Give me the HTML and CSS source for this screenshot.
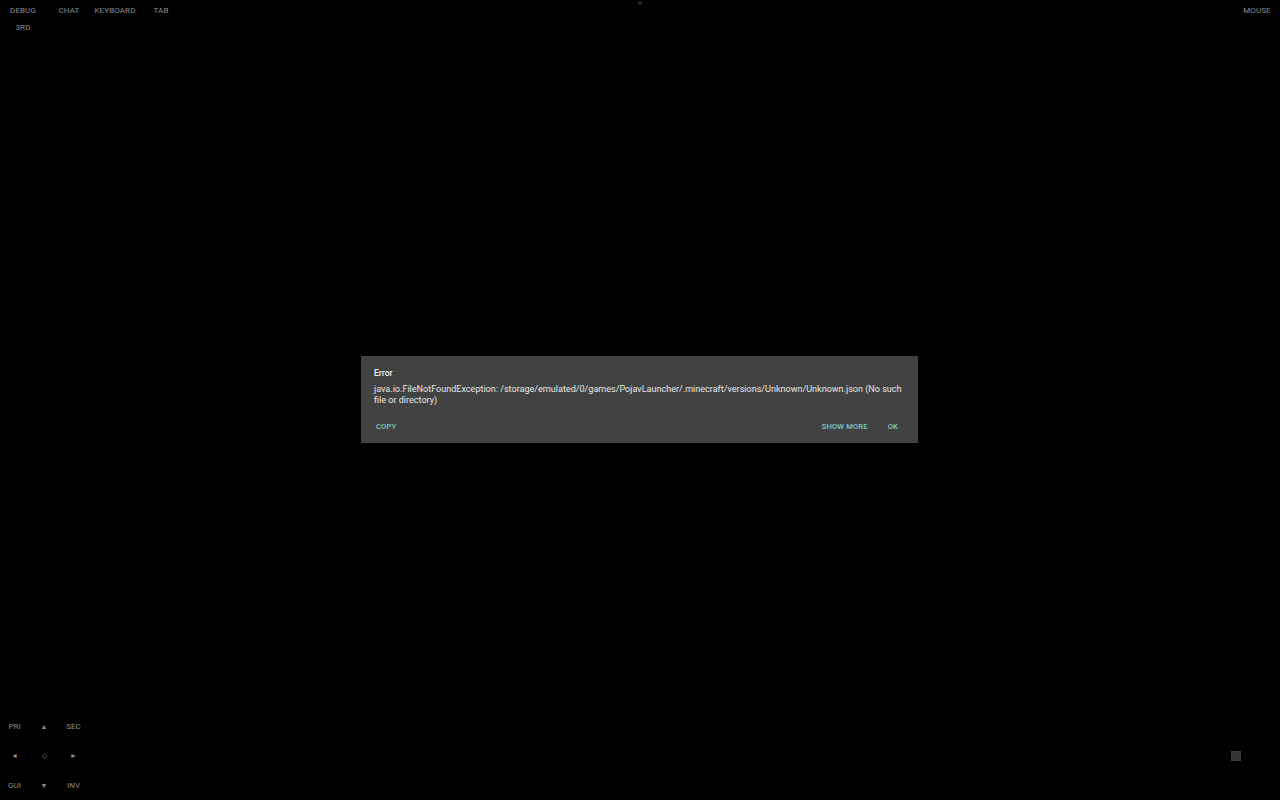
FILE: index.html
```html
<!DOCTYPE html>
<html>
<head>
<meta charset="utf-8">
<link rel="stylesheet" href="styles.css">
</head>
<body>
<div class="screen">
  <div class="topbar">
    <div class="top-left">
      <div class="ctl">DEBUG</div>
      <div class="ctl">CHAT</div>
      <div class="ctl">KEYBOARD</div>
      <div class="ctl">TAB</div>
      <div class="ctl">3RD</div>
    </div>
    <div class="top-center"><span class="dot"></span></div>
    <div class="top-right">
      <div class="ctl">MOUSE</div>
    </div>
  </div>

  <div class="middle">
    <div class="dialog">
      <div class="title">Error</div>
      <div class="message">java.io.FileNotFoundException: /storage/emulated/0/games/PojavLauncher/.minecraft/versions/Unknown/Unknown.json (No such file or directory)</div>
      <div class="actions">
        <span class="btn">COPY</span>
        <span class="spacer"></span>
        <span class="btn">SHOW MORE</span>
        <span class="btn">OK</span>
      </div>
    </div>
  </div>

  <div class="bottombar">
    <div class="dpad">
      <div class="pad">PRI</div>
      <div class="pad sym">&#9650;</div>
      <div class="pad">SEC</div>
      <div class="pad sym">&#9668;</div>
      <div class="pad sym">&#9671;</div>
      <div class="pad sym">&#9658;</div>
      <div class="pad">GUI</div>
      <div class="pad sym">&#9660;</div>
      <div class="pad">INV</div>
    </div>
    <div class="square-wrap"><span class="square"></span></div>
  </div>
</div>
</body>
</html>
```
FILE: styles.css
```css
html, body {
  margin: 0;
  padding: 0;
  background: #000;
  width: 1280px;
  height: 800px;
  overflow: hidden;
  font-family: Roboto, "Liberation Sans", sans-serif;
}
.screen {
  width: 1280px;
  height: 800px;
  display: flex;
  flex-direction: column;
}
.topbar {
  display: flex;
  justify-content: space-between;
  align-items: flex-start;
  height: 36px;
}
.top-left {
  display: flex;
  flex-wrap: wrap;
  width: 184px;
}
.ctl {
  width: 46px;
  height: 18px;
  display: flex;
  align-items: center;
  justify-content: center;
  color: #8c8c8c;
  font-size: 8px;
  letter-spacing: 0.1px;
  padding-top: 2px;
  box-sizing: border-box;
}
.top-left .ctl:nth-child(5) { padding-top: 1px; }
.top-center {
  width: 10px;
  padding-top: 1px;
  display: flex;
  justify-content: center;
}
.dot {
  width: 4px;
  height: 4px;
  border-radius: 50%;
  background: #2a2a2a;
}
.top-right {
  width: 184px;
  display: flex;
  justify-content: flex-end;
}
.top-right .ctl { width: 46px; }

.middle {
  flex: 1;
  display: flex;
  align-items: flex-start;
  justify-content: center;
  padding-top: 320px;
  padding-right: 1px;
}
.dialog {
  width: 557px;
  height: 87px;
  background: #424242;
  box-sizing: border-box;
  padding: 12px 13px 0 13px;
  color: #ffffff;
  box-shadow: 0 2px 6px rgba(0,0,0,0.6);
}
.title {
  font-size: 8.5px;
  font-weight: 500;
  line-height: 10px;
  margin-bottom: 6px;
  color: #f2f2f2;
}
.message {
  font-size: 9.05px;
  line-height: 10.5px;
  color: #e6e6e6;
  width: 531px;
}
.actions {
  display: flex;
  align-items: center;
  margin-top: 17px;
  padding: 0 2px;
}
.btn {
  font-size: 7.5px;
  font-weight: 500;
  color: #80cbc4;
  letter-spacing: 0.2px;
}
.actions .btn + .btn { margin-left: 20px; }
.spacer { flex: 1; }
.actions .btn:last-child { margin-right: 5px; }

.bottombar {
  display: flex;
  justify-content: space-between;
  align-items: flex-end;
  height: 89px;
}
.dpad {
  display: grid;
  grid-template-columns: 29px 30px 29px;
  grid-template-rows: 29.5px 29.5px 29.5px;
}
.pad {
  display: flex;
  align-items: center;
  justify-content: center;
  color: #8c8c8c;
  font-size: 8px;
  padding-top: 1px;
  box-sizing: border-box;
}
.pad.sym { font-size: 7px; }
.square-wrap {
  width: 49px;
  height: 89px;
  display: flex;
  align-items: flex-start;
  padding-top: 40px;
  box-sizing: border-box;
}
.square {
  width: 8px;
  height: 8px;
  background: #333333;
  border: 1px solid #3a3a3a;
}
```
